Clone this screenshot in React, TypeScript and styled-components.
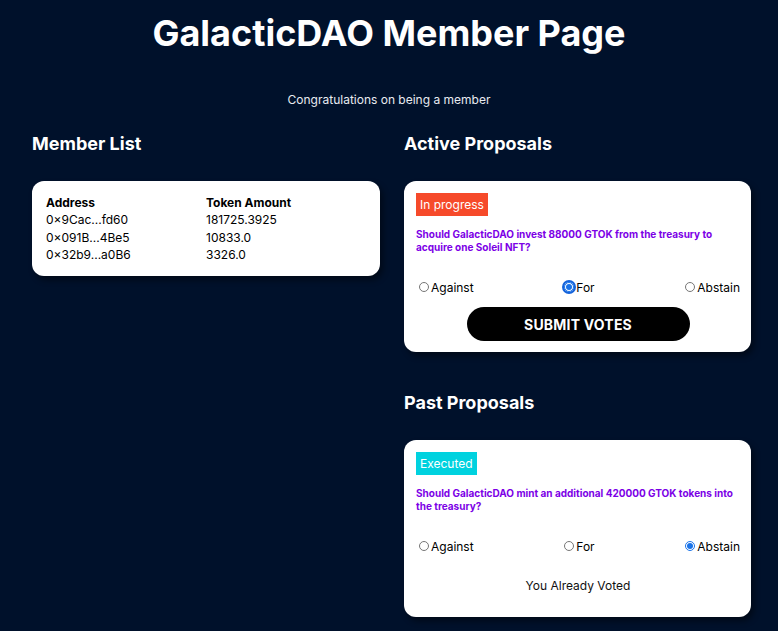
import React from "react";
import styled, { createGlobalStyle } from "styled-components";

const Global = createGlobalStyle`
  html, body { margin: 0; padding: 0; background: #00112b; }
  body { font-family: Inter, "Noto Sans", sans-serif; color: #fff; }
  * { box-sizing: border-box; }
`;

const Page = styled.div`
  min-height: 631px;
  background: #00112b;
  padding-top: 11px;
`;

const Title = styled.h1`
  margin: 0;
  text-align: center;
  font-size: 36px;
  line-height: 44px;
  font-weight: 700;
  color: #fff;
`;

const Subtitle = styled.p`
  margin: 37px 0 0;
  text-align: center;
  font-size: 12px;
  line-height: 16px;
  color: #e8ebf0;
`;

const Columns = styled.div`
  display: grid;
  grid-template-columns: 348px 347px;
  column-gap: 24px;
  padding: 0 27px 0 32px;
  margin-top: 25px;
  align-items: start;
`;

const Column = styled.div`
  display: flex;
  flex-direction: column;
`;

const SectionTitle = styled.h2<{ $spaced?: boolean }>`
  margin: ${(p) => (p.$spaced ? "40px" : "0")} 0 26px;
  font-size: 18px;
  line-height: 22px;
  font-weight: 700;
  color: #fff;
`;

const Card = styled.div<{ $pb?: number }>`
  background: #fff;
  border-radius: 12px;
  box-shadow: 3px 4px 6px rgba(0, 0, 0, 0.45);
  color: #000;
  padding: 12px 11px ${(p) => p.$pb ?? 11}px 12px;
`;

const MemberCard = styled(Card)`
  padding: 13px 14px 13px 14px;
`;

const Table = styled.div`
  display: grid;
  grid-template-columns: 160px 1fr;
  font-size: 12px;
  line-height: 17.3px;
`;

const HeadCell = styled.div`
  font-weight: 700;
`;

const Cell = styled.div`
  font-weight: 400;
`;

const Badge = styled.span<{ $bg: string }>`
  display: inline-block;
  background: ${(p) => p.$bg};
  color: #fff;
  font-size: 12px;
  line-height: 15px;
  padding: 4px 4px;
  font-weight: 400;
`;

const Question = styled.p`
  margin: 12px 0 25px;
  font-size: 10px;
  line-height: 13px;
  font-weight: 700;
  color: #7c00e6;
`;

const RadioRow = styled.div`
  display: flex;
  justify-content: space-between;
  align-items: center;
  height: 16px;
  font-size: 12px;
`;

const Option = styled.label`
  display: flex;
  align-items: center;
  color: #000;
`;

const RadioBox = styled.span<{ $focus?: boolean }>`
  display: inline-flex;
  align-items: center;
  justify-content: center;
  margin: 0 2px 0 3px;
  border-radius: 5px;
  box-shadow: ${(p) => (p.$focus ? "0 0 0 2px #1463db" : "none")};
  background: ${(p) => (p.$focus ? "#1463db" : "transparent")};
`;

const Radio = styled.input`
  width: 10px;
  height: 10px;
  margin: 0;
  accent-color: #1a73e8;
  outline: none;
`;

const ButtonWrap = styled.div`
  display: flex;
  justify-content: center;
  margin-top: 12px;
`;

const SubmitButton = styled.button`
  width: 223px;
  height: 34px;
  border: none;
  border-radius: 17px;
  background: #000;
  color: #fff;
  font-family: Inter, sans-serif;
  font-size: 14px;
  font-weight: 700;
  letter-spacing: 0.2px;
`;

const Voted = styled.p`
  margin: 24px 0 0;
  text-align: center;
  font-size: 12px;
  line-height: 16px;
  color: #111;
`;

type Vote = "against" | "for" | "abstain";

const Choice: React.FC<{ name: string; label: string; checked: boolean; focus?: boolean }> = ({
  name,
  label,
  checked,
  focus,
}) => (
  <Option>
    <RadioBox $focus={focus}>
      <Radio type="radio" name={name} checked={checked} readOnly />
    </RadioBox>
    {label}
  </Option>
);

const Options: React.FC<{ name: string; value: Vote; focus?: boolean }> = ({ name, value, focus }) => (
  <RadioRow>
    <Choice name={name} label="Against" checked={value === "against"} />
    <Choice name={name} label="For" checked={value === "for"} focus={focus} />
    <Choice name={name} label="Abstain" checked={value === "abstain"} />
  </RadioRow>
);

const members = [
  ["0×9Cac...fd60", "181725.3925"],
  ["0×091B...4Be5", "10833.0"],
  ["0×32b9...a0B6", "3326.0"],
];

export default function App() {
  return (
    <Page>
      <Global />
      <Title>GalacticDAO Member Page</Title>
      <Subtitle>Congratulations on being a member</Subtitle>
      <Columns>
        <Column>
          <SectionTitle>Member List</SectionTitle>
          <MemberCard>
            <Table>
              <HeadCell>Address</HeadCell>
              <HeadCell>Token Amount</HeadCell>
              {members.map(([a, t]) => (
                <React.Fragment key={a}>
                  <Cell>{a}</Cell>
                  <Cell>{t}</Cell>
                </React.Fragment>
              ))}
            </Table>
          </MemberCard>
        </Column>
        <Column>
          <SectionTitle>Active Proposals</SectionTitle>
          <Card>
            <Badge $bg="#f64a2a">In progress</Badge>
            <Question>
              Should GalacticDAO invest 88000 GTOK from the treasury to acquire one Soleil NFT?
            </Question>
            <Options name="active" value="for" focus />
            <ButtonWrap>
              <SubmitButton>SUBMIT VOTES</SubmitButton>
            </ButtonWrap>
          </Card>
          <SectionTitle $spaced>Past Proposals</SectionTitle>
          <Card $pb={23}>
            <Badge $bg="#00d2df">Executed</Badge>
            <Question>
              Should GalacticDAO mint an additional 420000 GTOK tokens into the treasury?
            </Question>
            <Options name="past" value="abstain" />
            <Voted>You Already Voted</Voted>
          </Card>
        </Column>
      </Columns>
    </Page>
  );
}
